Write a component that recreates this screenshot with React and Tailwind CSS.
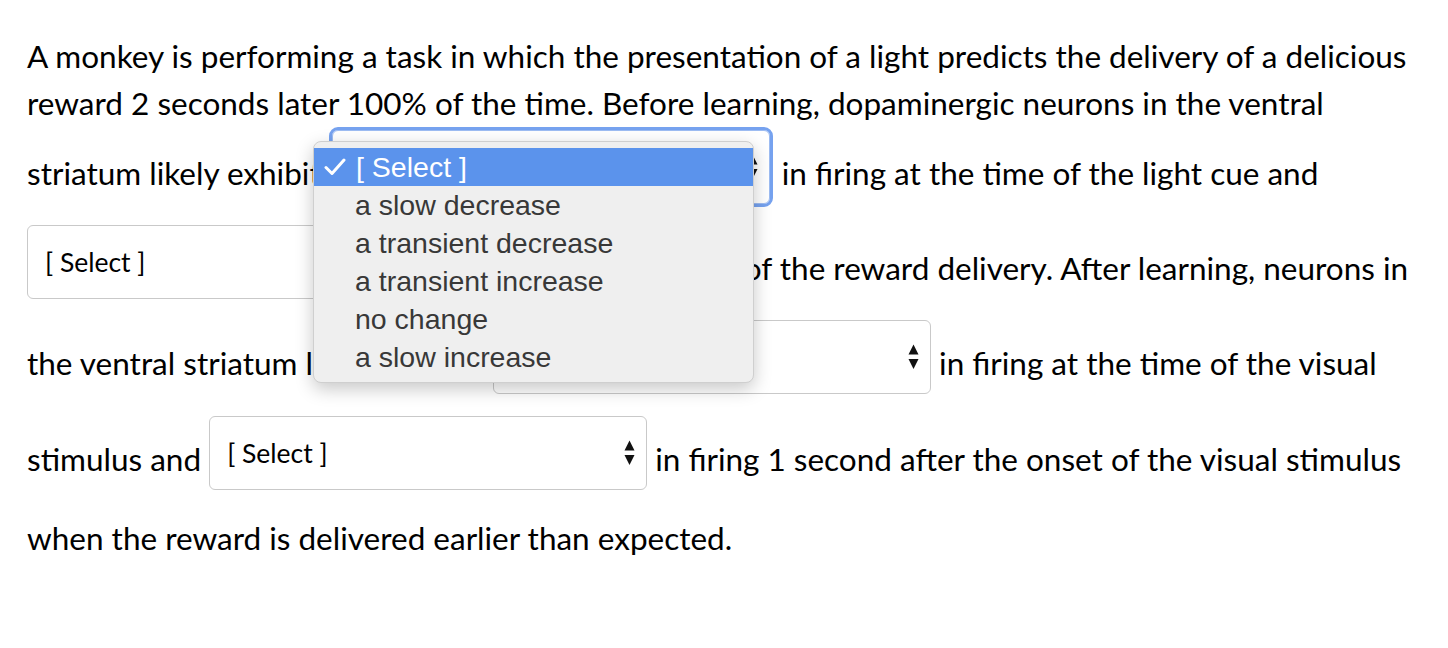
const Arrows = () => (
  <svg width="11" height="26" viewBox="0 0 11 26" className="shrink-0">
    <path d="M5.5 0.5 L10.5 10.5 L0.5 10.5 Z" fill="#111" />
    <path d="M0.5 15 L10.5 15 L5.5 25 Z" fill="#111" />
  </svg>
)

const SelectBox = ({ focused = false, className = "" }) => {
  return (
    <span
      className={
        (focused
          ? "inline-flex items-center justify-between h-[74px] w-[438px] rounded-[6px] border border-[#9dbcf2] bg-white pl-[17px] pr-[11px] align-[8px] outline-[3px] outline-solid outline-[#76a2ef] "
          : "inline-flex items-center justify-between h-[74px] w-[438px] rounded-[6px] border border-[#c9c9c9] bg-white pl-[17px] pr-[11px] align-[8px] ") + className
      }
    >
      <span className="leading-[34px] text-[26.5px] text-black">[ Select ]</span>
      <Arrows />
    </span>
  )
}

const options = ["a slow decrease", "a transient decrease", "a transient increase", "no change", "a slow increase"]

const Dropdown = () => {
  return (
    <div className="absolute left-[313px] top-[141px] w-[441px] rounded-[8px] border border-[#cfcfcf] bg-[#efefef] py-[6px] shadow-[0_6px_18px_rgba(0,0,0,0.22)] font-['Liberation_Sans',Arial,sans-serif] text-[28.5px]">
      <div className="flex h-[38px] items-center bg-[#5b93ec] text-white">
        <svg width="22" height="18" viewBox="0 0 22 18" className="ml-[10px] mr-[10px]">
          <path d="M2 9.5 L8 15.5 L20 2" fill="none" stroke="white" strokeWidth="3" strokeLinecap="round" strokeLinejoin="round" />
        </svg>
        <span>[ Select ]</span>
      </div>
      {options.map((o) => (
        <div key={o} className="flex h-[38px] items-center pl-[41px] text-[#383838]">
          {o}
        </div>
      ))}
    </div>
  )
}

export default function App() {
  return (
    <div className="relative h-[648px] w-full bg-white px-[27px] pt-[33px] font-['Lato',sans-serif] text-[31.5px] text-black">
      <div className="leading-[47px] whitespace-nowrap">
        A monkey is performing a task in which the presentation of a light predicts the delivery of a delicious
      </div>
      <div className="leading-[47px] whitespace-nowrap">
        reward 2 seconds later 100% of the time. Before learning, dopaminergic neurons in the ventral
      </div>
      <div className="mt-[3px] leading-[47px] whitespace-nowrap">
        striatum likely exhibit <SelectBox focused className="ml-[3px] mr-[4px]" /> in firing at the time of the light cue and
      </div>
      <div className="mt-[21px] leading-[47px] whitespace-nowrap">
        <SelectBox /> in firing at the time of the reward delivery. After learning, neurons in
      </div>
      <div className="mt-[21px] leading-[47px] whitespace-nowrap">
        the ventral striatum likely exhibit <SelectBox className="ml-[8px]" /> in firing at the time of the visual
      </div>
      <div className="mt-[22px] leading-[47px] whitespace-nowrap">
        stimulus and <SelectBox /> in firing 1 second after the onset of the visual stimulus
      </div>
      <div className="mt-[25px] leading-[47px] whitespace-nowrap">
        when the reward is delivered earlier than expected.
      </div>
      <Dropdown />
    </div>
  )
}
